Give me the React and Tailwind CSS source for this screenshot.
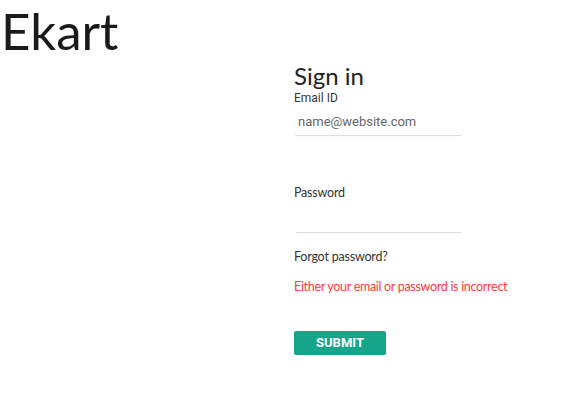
export default function App() {
  const tit = { fontFamily: 'Lato, "Open Sans", sans-serif' };
  return (
    <div className="w-[586px] h-[408px] bg-white relative overflow-hidden">
      <h1 className="text-[51px] leading-[62px] text-[#1a1a1a] pl-[1px]" style={tit}>Ekart</h1>
      <div className="flex">
        <div className="w-[294px]" />
        <div className="w-[169px] flex flex-col">
          <h2 className="text-[24px] leading-[27px] text-[#222]" style={tit}>Sign in</h2>
          <label className="mt-[1px] text-[12px] leading-[16px] text-[#333] font-['Roboto',sans-serif]">Email ID</label>
          <input
            className="mt-[1px] h-[28px] px-[4px] text-[13px] font-['Roboto',sans-serif] text-[#555] placeholder:text-[#666] outline-none rounded-[3px] shadow-[0_2px_1px_-1px_rgba(0,0,0,0.15)]"
            placeholder="name@website.com"
          />
          <label className="mt-[50px] text-[12.5px] leading-[16px] text-[#333] tracking-[-0.2px]" style={tit}>Password</label>
          <input
            type="password"
            className="mt-[3px] h-[28px] px-[4px] text-[13px] outline-none rounded-[3px] shadow-[0_2px_1px_-1px_rgba(0,0,0,0.15)]"
          />
          <a className="mt-[17px] text-[12.5px] leading-[16px] text-[#333] tracking-[-0.2px]" style={tit}>Forgot password?</a>
          <p className="mt-[14px] text-[12.5px] leading-[16px] text-[#ff3b3b] whitespace-nowrap tracking-[-0.3px]" style={tit}>Either your email or password is incorrect</p>
          <button className="mt-[36px] w-[92px] h-[24px] bg-[#17a589] text-white text-[13px] font-bold font-['Roboto',sans-serif] rounded-[2px]">SUBMIT</button>
        </div>
      </div>
    </div>
  );
}
